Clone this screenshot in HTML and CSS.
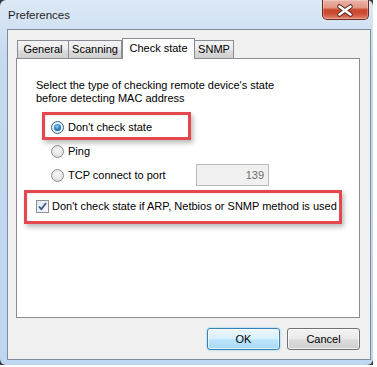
FILE: index.html
```html
<!DOCTYPE html>
<html>
<head>
<meta charset="utf-8">
<link rel="stylesheet" href="styles.css">
</head>
<body>
<div class="screen">
  <div class="window">
    <div class="titlebar">
      <span class="title">Preferences</span>
      <div class="close">
        <svg width="45" height="19" viewBox="0 0 45 19">
          <path d="M16.5 6.5 L27.5 14.5 M27.5 6.5 L16.5 14.5" stroke="#5a2a22" stroke-width="4.6" stroke-linecap="round" fill="none"/>
          <path d="M16.5 6.5 L27.5 14.5 M27.5 6.5 L16.5 14.5" stroke="#ffffff" stroke-width="2.6" stroke-linecap="round" fill="none"/>
        </svg>
      </div>
    </div>
    <div class="client">
      <div class="tabs">
        <div class="tab tab-general">General</div>
        <div class="tab tab-scanning">Scanning</div>
        <div class="tab tab-check active">Check state</div>
        <div class="tab tab-snmp">SNMP</div>
      </div>
      <div class="panel">
        <p class="desc">Select the type of checking remote device's state<br>before detecting MAC address</p>
        <div class="radios">
          <div class="row"><span class="radio checked"></span><span class="label">Don't check state</span></div>
          <div class="row"><span class="radio"></span><span class="label">Ping</span></div>
          <div class="row"><span class="radio"></span><span class="label tcp-label">TCP connect to port</span><span class="port">139</span></div>
        </div>
        <div class="row check-row">
          <span class="checkbox">
            <svg width="11" height="11" viewBox="0 0 11 11"><path d="M2 5.5 L4.3 8.2 L9 2" stroke="#3f5487" stroke-width="1.8" fill="none" stroke-linejoin="round"/></svg>
          </span>
          <span class="label">Don't check state if ARP, Netbios or SNMP method is used</span>
        </div>
        <div class="mark mark-radio"></div>
        <div class="mark mark-check"></div>
      </div>
      <div class="buttons">
        <div class="btn btn-default">OK</div>
        <div class="btn">Cancel</div>
      </div>
    </div>
  </div>
</div>
</body>
</html>
```
FILE: styles.css
```css
* { box-sizing: border-box; }
html, body { margin: 0; padding: 0; background: #ffffff; }
body { font-family: "Liberation Sans", Arial, sans-serif; font-size: 11px; color: #000; }

.screen {
  width: 373px;
  height: 365px;
  background: #3a3a3a;
}
.window {
  width: 373px;
  height: 365px;
  border-radius: 6px;
  background: linear-gradient(to bottom, #dce8f5 0px, #d2e2f3 28px, #c4daf0 60px, #bed6ef 100%);
  display: flex;
  flex-direction: column;
}

.titlebar {
  height: 29px;
  display: flex;
  justify-content: space-between;
  align-items: flex-start;
  padding-left: 8px;
  padding-right: 4px;
}
.title {
  font-size: 11.5px;
  line-height: 14px;
  margin-top: 8px;
  color: #1e1e1e;
}
.close {
  width: 47px;
  height: 20px;
  border: 1px solid #6e2a20;
  border-top: none;
  border-radius: 0 0 5px 5px;
  background: linear-gradient(to bottom, #eab4a8 0%, #e39684 40%, #c9452d 52%, #cf4f37 75%, #e28a72 100%);
  box-shadow: inset 0 0 0 1px rgba(255,255,255,0.25);
}
.close svg { display: block; }

.client {
  margin: 0 2px 0 7px;
  height: 331px;
  border: 1px solid #7f8c99;
  background: #f0f0f0;
  padding: 8px 10px 0 8px;
  display: flex;
  flex-direction: column;
}

.tabs {
  display: flex;
  align-items: flex-end;
  height: 21px;
  margin-left: 1px;
  margin-bottom: -1px;
  position: relative;
  z-index: 1;
}
.tab {
  height: 19px;
  border: 1px solid #898c95;
  border-right: none;
  background: linear-gradient(to bottom, #f3f3f3 0%, #ebebeb 50%, #dddddd 51%, #cfcfcf 100%);
  text-align: center;
  line-height: 17px;
  color: #000;
}
.tab-general { width: 51px; }
.tab-scanning { width: 54px; border-right: 1px solid #898c95; }
.tab-check { width: 73px; }
.tab-snmp { width: 39px; border-right: 1px solid #898c95; border-left: none; }
.tab.active {
  height: 21px;
  background: #ffffff;
  border: 1px solid #898c95;
  border-bottom: none;
  line-height: 18px;
}

.panel {
  position: relative;
  width: 344px;
  height: 260px;
  border: 1px solid #898c95;
  background: #ffffff;
  padding: 20px 0 0 19px;
}
.desc {
  margin: 0;
  line-height: 13px;
}
.radios {
  margin: 10px 0 0 15px;
}
.row {
  height: 24px;
  display: flex;
  align-items: center;
}
.radio {
  width: 13px;
  height: 13px;
  border-radius: 50%;
  border: 1px solid #8d8f93;
  background: radial-gradient(circle at 50% 40%, #fafafa 0%, #e6e6e6 55%, #cfcfcf 100%);
  margin-right: 4px;
  position: relative;
  flex: none;
}
.radio.checked {
  border-color: #2c628b;
  background: radial-gradient(circle at 50% 40%, #f5f9fc 0%, #dfe9f2 100%);
}
.radio.checked::after {
  content: "";
  position: absolute;
  left: 2px;
  top: 2px;
  width: 7px;
  height: 7px;
  border-radius: 50%;
  background: radial-gradient(circle at 45% 35%, #8ed0f5 0%, #2f8acb 45%, #0f3f6e 100%);
}
.tcp-label { width: 128px; }
.port {
  width: 73px;
  height: 22px;
  border: 1px solid #b6babf;
  background: #f0f0f0;
  color: #6d6d6d;
  text-align: right;
  line-height: 20px;
  padding-right: 4px;
}

.check-row {
  margin-top: 7px;
}
.checkbox {
  width: 13px;
  height: 13px;
  border: 1px solid #8f8f8f;
  background: linear-gradient(135deg, #dfe9f5 0%, #f5f8fb 100%);
  margin-right: 3px;
  display: flex;
  align-items: center;
  justify-content: center;
  flex: none;
}
.checkbox svg { display: block; }

.mark {
  position: absolute;
  border: 3px solid #e5474e;
  box-shadow: 2px 3px 5px rgba(0,0,0,0.28), inset 1px 1px 2px rgba(0,0,0,0.08);
}
.mark-radio { left: 25px; top: 53px; width: 149px; height: 28px; }
.mark-check { left: 7px; top: 131px; width: 318px; height: 34px; }

.buttons {
  display: flex;
  justify-content: flex-end;
  gap: 7px;
  margin-top: 10px;
}
.btn {
  width: 73px;
  height: 22px;
  border: 1px solid #707070;
  border-radius: 3px;
  background: linear-gradient(to bottom, #f2f2f2 0%, #ebebeb 50%, #dddddd 51%, #cfcfcf 100%);
  text-align: center;
  line-height: 20px;
  box-shadow: inset 0 0 0 1px rgba(255,255,255,0.7);
}
.btn-default {
  border-color: #3c7fb1;
  background: linear-gradient(to bottom, #eaf6fd 0%, #d9f0fc 50%, #bee6fd 51%, #a7d9f5 100%);
  box-shadow: inset 0 0 0 1px rgba(255,255,255,0.6), 0 0 2px #6cc4ef;
}
```
